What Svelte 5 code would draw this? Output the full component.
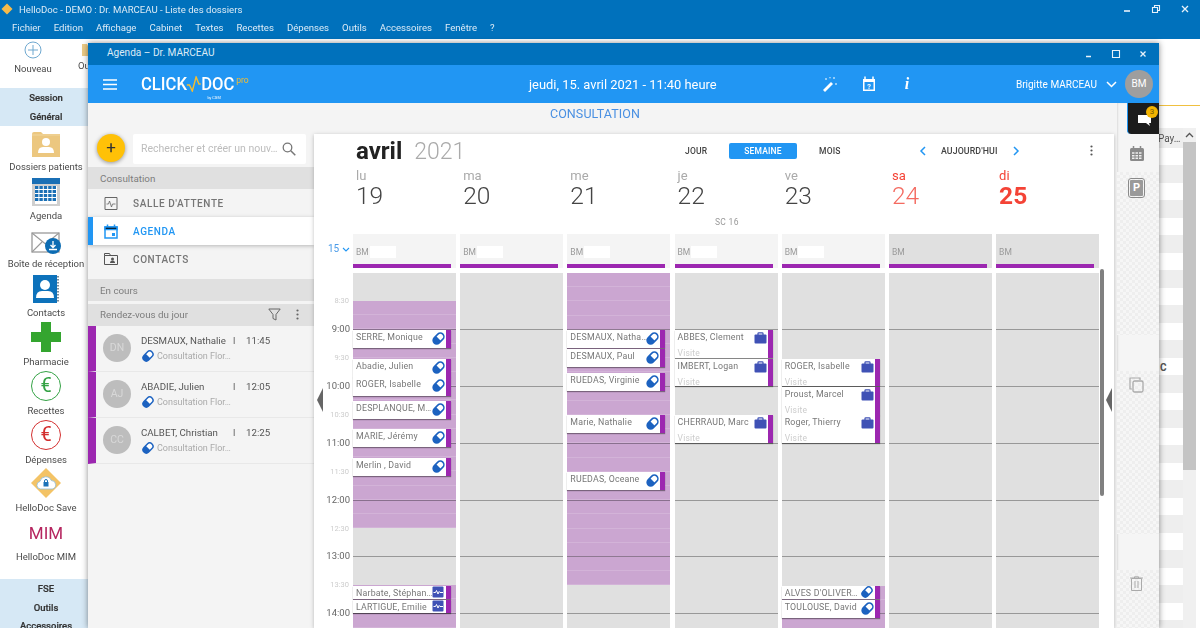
<script>
  const menus = ["Fichier", "Edition", "Affichage", "Cabinet", "Textes", "Recettes", "Dépenses", "Outils", "Accessoires", "Fenêtre", "?"];

  const days = [
    { d: "lu", n: 19 },
    { d: "ma", n: 20 },
    { d: "me", n: 21 },
    { d: "je", n: 22 },
    { d: "ve", n: 23 },
    { d: "sa", n: 24, off: true },
    { d: "di", n: 25, off: true, sunday: true }
  ];

  // y values are px from the top of the time grid (grid starts at 273)
  const gridTop = 273;
  const hourLines = [56, 113, 170, 226.5, 283, 340];
  const times = [
    { t: "8:30", y: 27, half: true },
    { t: "9:00", y: 56 },
    { t: "9:30", y: 84, half: true },
    { t: "10:00", y: 113 },
    { t: "10:30", y: 141, half: true },
    { t: "11:00", y: 170 },
    { t: "11:30", y: 198, half: true },
    { t: "12:00", y: 226.5 },
    { t: "12:30", y: 255, half: true },
    { t: "13:00", y: 283 },
    { t: "13:30", y: 311, half: true },
    { t: "14:00", y: 340 }
  ];

  const blocks = [
    [{ from: 28, to: 255 }, { from: 312, to: 360 }],
    [],
    [{ from: 0, to: 312 }],
    [],
    [{ from: 313, to: 360 }],
    [],
    []
  ];

  const events = [
    [
      { name: "SERRE, Monique", y: 330, h: 18 },
      { name: "Abadie, Julien", y: 359, h: 18 },
      { name: "ROGER, Isabelle", y: 377, h: 19 },
      { name: "DESPLANQUE, M…", y: 401, h: 18 },
      { name: "MARIE, Jérémy", y: 429, h: 18 },
      { name: "Merlin , David", y: 458, h: 18 },
      { name: "Narbate, Stéphan…", y: 586, h: 13, kind: "heart" },
      { name: "LARTIGUE, Emilie", y: 600, h: 13, kind: "heart" }
    ],
    [],
    [
      { name: "DESMAUX, Natha…", y: 330, h: 18 },
      { name: "DESMAUX, Paul", y: 349, h: 18 },
      { name: "RUEDAS, Virginie", y: 373, h: 18 },
      { name: "Marie, Nathalie", y: 415, h: 18 },
      { name: "RUEDAS, Oceane", y: 472, h: 18 }
    ],
    [
      { name: "ABBES, Clement", y: 330, h: 28, kind: "bag" },
      { name: "IMBERT, Logan", y: 359, h: 27, kind: "bag" },
      { name: "CHERRAUD, Marc", y: 415, h: 28, kind: "bag" }
    ],
    [
      { name: "ROGER, Isabelle", y: 359, h: 27, kind: "bag" },
      { name: "Proust, Marcel", y: 387, h: 28, kind: "bag" },
      { name: "Roger, Thierry", y: 415, h: 28, kind: "bag" },
      { name: "ALVES D'OLIVER…", y: 586, h: 13 },
      { name: "TOULOUSE, David", y: 600, h: 18 }
    ],
    [],
    []
  ];

  const appts = [
    { init: "DN", name: "DESMAUX, Nathalie", time: "11:45" },
    { init: "AJ", name: "ABADIE, Julien", time: "12:05" },
    { init: "CC", name: "CALBET, Christian", time: "12:25" }
  ];
</script>

{#snippet pill(size)}
  <svg width={size} height={size} viewBox="0 0 14 14">
    <g transform="rotate(-45 7 7)">
      <rect x="0.4" y="3.2" width="13.2" height="7.6" rx="3.8" fill="#fff" stroke="#1c62c0" stroke-width="1.7" />
      <path d="M7 3.2H4.2a3.8 3.8 0 0 0 0 7.6H7z" fill="#1c62c0" />
    </g>
  </svg>
{/snippet}

{#snippet bag()}
  <svg width="13" height="12" viewBox="0 0 13 12">
    <path d="M4 3V1.6Q4 .8 4.8 .8h3.4q.8 0 .8 .8V3" fill="none" stroke="#3f51b5" stroke-width="1.2" />
    <rect x=".5" y="2.6" width="12" height="9" rx="1" fill="#3f51b5" />
  </svg>
{/snippet}

{#snippet heart()}
  <svg width="12" height="12" viewBox="0 0 12 12">
    <rect x=".5" y=".5" width="11" height="11" rx="1" fill="#3f51b5" />
    <path d="M1.5 6.5h2l1-2 1.5 3.5 1.2-2.5.8 1h3" fill="none" stroke="#fff" stroke-width="1" />
  </svg>
{/snippet}

<div class="screen">
  <header class="topbar">
    <div class="app-title">
      <svg class="diamond" width="12" height="12" viewBox="0 0 12 12"><path d="M6 .5 11.5 6 6 11.5 .5 6z" fill="#f6bb4a" /></svg>
      HelloDoc - DEMO : Dr. MARCEAU - Liste des dossiers
    </div>
    <nav class="menu">
      {#each menus as m}<span>{m}</span>{/each}
    </nav>
    <div class="app-controls">
      <svg width="10" height="10" viewBox="0 0 10 10"><path d="M2 7h6" stroke="#e8f2fa" stroke-width="1.6" /></svg>
      <svg width="10" height="10" viewBox="0 0 10 10"><path d="M1.5 3.5h5v5h-5zM3.5 3V1.5h5v5H7" fill="none" stroke="#e8f2fa" stroke-width="1.1" /></svg>
      <svg width="10" height="10" viewBox="0 0 10 10"><path d="M2 2l6 6M8 2l-6 6" stroke="#e8f2fa" stroke-width="1.3" /></svg>
    </div>
  </header>

  <div class="desktop">
    <aside class="sidebar">
      <div class="toolbar">
        <div class="new">
          <svg width="18" height="18" viewBox="0 0 18 18"><circle cx="9" cy="9" r="8" fill="none" stroke="#6fa8cf" stroke-width="1" /><path d="M9 4v10M4 9h10" stroke="#6fa8cf" stroke-width="1" /></svg>
          <span>Nouveau</span>
        </div>
        <div class="open">
          <svg width="14" height="13" viewBox="0 0 14 13"><path d="M0 1h5l1 2h8v10H0z" fill="#eccb86" /></svg>
          <span>Ouvrir</span>
        </div>
      </div>
      <div class="section">
        <b>Session</b>
        <b>Général</b>
      </div>
      <div class="items">
        <div class="item">
          <svg width="30" height="26" viewBox="0 0 30 26">
            <path d="M1 3q0-2 2-2h7l2 2h17v23H1z" fill="#ecc77f" />
            <path d="M1 4h28" stroke="#f4dca8" stroke-width=".8" />
            <circle cx="15" cy="11" r="4" fill="#fff" />
            <path d="M7 22q0-6 5-6h6q5 0 5 6z" fill="#fff" />
          </svg>
          <span>Dossiers patients</span>
        </div>
        <div class="item">
          <svg width="28" height="28" viewBox="0 0 28 28">
            <rect width="28" height="28" fill="#cfcfcf" />
            <rect width="28" height="6" fill="#1a6fb5" />
            <path d="M3 8h22v18H3z" fill="#fff" />
            <path d="M3 9.5h22M3 13.5h22M3 17.5h22M3 21.5h22" stroke="#1a6fb5" stroke-width="3" stroke-dasharray="3.4 1" />
          </svg>
          <span>Agenda</span>
        </div>
        <div class="item">
          <svg width="30" height="22" viewBox="0 0 30 22">
            <rect x="1" y="1" width="27" height="19" fill="#fff" stroke="#9a9a9a" stroke-width="1.3" />
            <path d="M1 1l13.5 11L28 1M1 20l10-10M28 20L18 10" fill="none" stroke="#9a9a9a" stroke-width="1.1" />
            <circle cx="22" cy="14" r="8" fill="#0c6cb3" />
            <path d="M22 9v6M19.5 13l2.5 2.5 2.5-2.5M18 17.5h8" fill="none" stroke="#fff" stroke-width="1.3" />
          </svg>
          <span>Boîte de réception</span>
        </div>
        <div class="item">
          <svg width="28" height="28" viewBox="0 0 28 28">
            <rect x="1" width="24" height="28" fill="#0d72bb" />
            <path d="M26 1v26" stroke="#7d8d9a" stroke-width="2" stroke-dasharray="1.5 1.5" />
            <circle cx="13" cy="10" r="5" fill="#fff" />
            <path d="M4 23q0-7 6-7h6q6 0 6 7z" fill="#fff" />
          </svg>
          <span>Contacts</span>
        </div>
        <div class="item">
          <svg width="30" height="30" viewBox="0 0 30 30"><path d="M10 0h10v10h10v10H20v10H10V20H0V10h10z" fill="#34a52f" /></svg>
          <span>Pharmacie</span>
        </div>
        <div class="item">
          <div class="euro green">€</div>
          <span>Recettes</span>
        </div>
        <div class="item">
          <div class="euro red">€</div>
          <span>Dépenses</span>
        </div>
        <div class="item">
          <svg width="30" height="30" viewBox="0 0 30 30">
            <path d="M15 0l15 15-15 15L0 15z" fill="#f3c366" />
            <path d="M9.5 21a3.8 3.8 0 0 1-.6-7.500 6 6 0 0 1 11.400-1 4.300 4.300 0 0 1 1 8.500z" fill="#fff" stroke="#8dbbd8" stroke-width=".8" />
            <rect x="12.5" y="14" width="5" height="4.5" fill="#1c72b8" />
            <path d="M13.5 14v-1a1.500 1.500 0 0 1 3 0v1" fill="none" stroke="#1c72b8" />
          </svg>
          <span>HelloDoc Save</span>
        </div>
        <div class="item">
          <div class="mim">MIM</div>
          <span>HelloDoc MIM</span>
        </div>
      </div>
      <div class="section">
        <b>FSE</b>
        <b>Outils</b>
        <b>Accessoires</b>
      </div>
    </aside>

    <section class="window">
      <div class="win-title">
        <span>Agenda – Dr. MARCEAU</span>
        <div class="win-controls">
          <svg width="10" height="10" viewBox="0 0 10 10"><path d="M2 7.5h5" stroke="#e8f2fa" stroke-width="1.5" /></svg>
          <svg width="10" height="10" viewBox="0 0 10 10"><path d="M1.5 1.5h7v7h-7z" fill="none" stroke="#e8f2fa" stroke-width="1.1" /></svg>
          <svg width="10" height="10" viewBox="0 0 10 10"><path d="M2.5 2.5l5 5M7.5 2.5l-5 5" stroke="#e8f2fa" stroke-width="1.3" /></svg>
        </div>
      </div>

      <div class="app-head">
        <svg class="burger" width="14" height="11" viewBox="0 0 14 11"><path d="M0 1h14M0 5.5h14M0 10h14" stroke="#fff" stroke-width="1.5" /></svg>
        <div class="logo">
          <span>CLICK</span>
          <svg width="15" height="16" viewBox="0 0 15 16"><path d="M0 9h3l3 6 4-14 3 7h2" fill="none" stroke="#f6bd2f" stroke-width="1.5" /></svg>
          <span>DOC</span>
          <sup>pro</sup>
          <small>by CGM</small>
        </div>
        <div class="now">jeudi, 15. avril 2021 - 11:40 heure</div>
        <div class="head-icons">
          <svg width="16" height="16" viewBox="0 0 16 16">
            <path d="M1 14l8-8 2 2-8 8z" fill="#fff" />
            <path d="M4 2l1 1-1 1-1-1zM12 1l1 1-1 1-1-1zM14 7l1 1-1 1-1-1zM8 1l.8.8-.8.8-.8-.8z" fill="#fff" />
          </svg>
          <svg width="14" height="16" viewBox="0 0 14 16">
            <path d="M1 3h12v12H1z" fill="#fff" />
            <path d="M3 .5v3M11 .5v3" stroke="#fff" stroke-width="1.5" />
            <path d="M2.5 6h9v7.5h-9z" fill="#2196f3" />
            <text x="7" y="12.5" class="q">?</text>
          </svg>
          <span class="info">i</span>
        </div>
        <div class="user">
          <span>Brigitte MARCEAU</span>
          <svg width="11" height="7" viewBox="0 0 11 7"><path d="M1 1l4.5 4.5L10 1" fill="none" stroke="#fff" stroke-width="1.5" /></svg>
          <div class="avatar">BM</div>
        </div>
      </div>

      <div class="win-body">
        <div class="left">
          <div class="search-row">
            <div class="fab">+</div>
            <div class="search">
              <span>Rechercher et créer un nouv…</span>
              <svg width="14" height="14" viewBox="0 0 14 14"><circle cx="5.5" cy="5.5" r="4.3" fill="none" stroke="#777" stroke-width="1.3" /><path d="M8.8 8.8l4.5 4.5" stroke="#777" stroke-width="1.5" /></svg>
            </div>
          </div>
          <div class="band consult">Consultation</div>
          <div class="nav-row">
            <svg width="13" height="13" viewBox="0 0 13 13"><path d="M.5 .5h12v12H.5z" fill="none" stroke="#666" /><path d="M2 7h2l1-3 2 6 1-3h3" fill="none" stroke="#666" stroke-width=".8" /></svg>
            SALLE D'ATTENTE
          </div>
          <div class="nav-row active">
            <svg width="14" height="15" viewBox="0 0 14 15"><path d="M1 3h12v11H1z" fill="none" stroke="#2196f3" stroke-width="1.5" /><path d="M1 3h12v2.5H1zM3.5 .5V3M10.5 .5V3" stroke="#2196f3" stroke-width="1.5" /><rect x="8" y="9" width="3" height="3" fill="#2196f3" /></svg>
            AGENDA
          </div>
          <div class="nav-row">
            <svg width="14" height="12" viewBox="0 0 14 12"><path d="M.5 2.5h13v9H.5zM.5 2.5V.5h5l1 2" fill="none" stroke="#555" /><circle cx="8.5" cy="6" r="1.5" fill="#555" /><path d="M6 10q0-2.5 2.5-2.5T11 10z" fill="#555" /></svg>
            CONTACTS
          </div>
          <div class="band encours">En cours</div>
          <div class="band rdv">
            <span>Rendez-vous du jour</span>
            <svg width="13" height="13" viewBox="0 0 13 13"><path d="M.8 1h11.4L8 6.5V12L5 10.500v-4z" fill="none" stroke="#666" stroke-width="1" /></svg>
            <svg class="kebab" width="3" height="11" viewBox="0 0 3 11"><circle cx="1.5" cy="1.5" r="1.1" fill="#666" /><circle cx="1.5" cy="5.5" r="1.1" fill="#666" /><circle cx="1.5" cy="9.5" r="1.1" fill="#666" /></svg>
          </div>
          {#each appts as a}
            <div class="appt">
              <div class="initials">{a.init}</div>
              <div class="appt-text">
                <div class="appt-line"><span class="appt-name">{a.name}</span><span class="sep">I</span><span>{a.time}</span></div>
                <div class="appt-sub">{@render pill(12)}<span>Consultation Flor…</span></div>
              </div>
            </div>
          {/each}
        </div>

        <div class="center">
          <div class="context">CONSULTATION</div>
          <div class="card">
            <div class="cal-head">
              <div class="month"><b>avril</b><span>2021</span></div>
              <div class="views">
                <span>JOUR</span>
                <span class="on">SEMAINE</span>
                <span>MOIS</span>
              </div>
              <div class="pager">
                <svg width="7" height="10" viewBox="0 0 7 10"><path d="M6 1L2 5l4 4" fill="none" stroke="#2196f3" stroke-width="1.5" /></svg>
                <span>AUJOURD'HUI</span>
                <svg width="7" height="10" viewBox="0 0 7 10"><path d="M1 1l4 4-4 4" fill="none" stroke="#2196f3" stroke-width="1.5" /></svg>
              </div>
              <svg width="3" height="11" viewBox="0 0 3 11"><circle cx="1.5" cy="1.5" r="1.1" fill="#555" /><circle cx="1.5" cy="5.5" r="1.1" fill="#555" /><circle cx="1.5" cy="9.5" r="1.1" fill="#555" /></svg>
            </div>

            <div class="cols day-heads">
              <div></div>
              {#each days as day}
                <div class="day" class:off={day.off} class:sunday={day.sunday}>
                  <span class="dow">{day.d}</span>
                  <span class="num">{day.n}</span>
                </div>
              {/each}
            </div>

            <div class="week-no">SC 16</div>

            <div class="cols col-heads">
              <div class="step">15 <svg width="8" height="5" viewBox="0 0 8 5"><path d="M1 1l3 3 3-3" fill="none" stroke="#2196f3" stroke-width="1.1" /></svg></div>
              {#each days as day}
                <div class="col-head" class:off={day.off}>
                  <div class="bm"><span>BM</span>{#if !day.off}<i></i>{/if}</div>
                  <div class="bar"></div>
                </div>
              {/each}
            </div>

            <div class="cols time-grid">
              <div class="hours">
                {#each times as t}
                  <span class:half={t.half} style="top:{t.y}px">{t.t}</span>
                {/each}
              </div>
              {#each days as day, c}
                <div class="col">
                  {#each blocks[c] as b}
                    <div class="block" style="top:{b.from}px;height:{b.to - b.from}px"></div>
                  {/each}
                  {#each hourLines as y}
                    <div class="hour-line" style="top:{y}px"></div>
                  {/each}
                  {#each events[c] as e}
                    <div class="event" style="top:{e.y - gridTop}px;height:{e.h}px">
                      <div class="event-body">
                        <span class="event-name">{e.name}</span>
                        {#if e.kind === "bag"}
                          <span class="visit">Visite</span>
                        {/if}
                      </div>
                      <div class="event-icon" class:short={e.h < 18}>
                        {#if e.kind === "bag"}{@render bag()}{:else if e.kind === "heart"}{@render heart()}{:else}{@render pill(e.h < 18 ? 12 : 13)}{/if}
                      </div>
                    </div>
                  {/each}
                </div>
              {/each}
            </div>
            <div class="grid-scroll"></div>
            <svg class="fold fold-left" width="6" height="24" viewBox="0 0 6 24"><path d="M6 0v24L0 12z" fill="#666" /></svg>
            <svg class="fold fold-right" width="6" height="24" viewBox="0 0 6 24"><path d="M6 0v24L0 12z" fill="#666" /></svg>
          </div>
        </div>

        <div class="rail">
          <div class="chat">
            <svg width="16" height="14" viewBox="0 0 16 14"><path d="M0 3h13v8h-2l1 3-4-3H0z" fill="#fff" /></svg>
            <span class="badge">3</span>
          </div>
          <div class="rail-solid first">
            <svg width="14" height="15" viewBox="0 0 14 15"><rect y="2" width="14" height="13" rx="1.5" fill="#8a8a8a" /><path d="M3.5 0v3M10.5 0v3" stroke="#8a8a8a" stroke-width="1.5" /><path d="M2 7h10M2 9.7h10M2 12.3h10" stroke="#eee" stroke-width="1.6" stroke-dasharray="2.5 1" /></svg>
          </div>
          <div class="rail-check">
            <div class="parking"><span>P</span></div>
          </div>
          <div class="rail-solid gap"></div>
          <div class="rail-check">
            <svg width="15" height="16" viewBox="0 0 15 16"><path d="M3 12H1V1h10v2" fill="none" stroke="#aaa" stroke-width="1.2" /><rect x="4" y="4" width="10" height="11" rx="1.5" fill="none" stroke="#aaa" stroke-width="1.3" /></svg>
          </div>
          <div class="rail-solid gap"></div>
          <div class="rail-check last">
            <svg width="13" height="15" viewBox="0 0 13 15"><path d="M0 2h13M4.5 2V.8h4V2" fill="none" stroke="#aaa" stroke-width="1" /><path d="M1.5 2.5h10V14.5h-10zM5 5v7M8 5v7" fill="none" stroke="#aaa" stroke-width="1" /></svg>
          </div>
        </div>
      </div>
    </section>

    <div class="backdrop">
      <div class="yellow"></div>
      <div class="table-wrap">
        <div class="table">
          <div class="th">Pay…</div>
          <div class="rows"><b>C</b></div>
        </div>
        <div class="vscroll">
          <svg width="9" height="6" viewBox="0 0 9 6"><path d="M1 5l3.5-3.5L8 5" fill="none" stroke="#555" stroke-width="1.3" /></svg>
          <div class="thumb"></div>
        </div>
      </div>
    </div>
  </div>
</div>

<style>
  :global(body) {
    overflow: hidden;
    background: #fff;
    font-family: Roboto, "Liberation Sans", sans-serif;
  }

  .screen {
    width: 1200px;
    height: 628px;
    display: flex;
    flex-direction: column;
    overflow: hidden;
    filter: blur(0.35px);
  }

  /* main application bar */
  .topbar {
    position: relative;
    height: 40px;
    flex: none;
    background: #0071bc;
    color: #dcebf6;
    font-size: 9.6px;
    border-bottom: 1px solid #fff;
    box-sizing: border-box;
  }
  .app-title {
    display: flex;
    align-items: center;
    gap: 6px;
    height: 18px;
    padding-left: 1px;
  }
  .menu {
    display: flex;
    gap: 13px;
    padding: 4px 0 0 12px;
  }
  .app-controls {
    position: absolute;
    right: 10px;
    top: 4px;
    display: flex;
    gap: 19px;
  }

  .desktop {
    flex: 1;
    display: flex;
    min-height: 0;
  }

  /* left application sidebar */
  .sidebar {
    width: 88px;
    flex: none;
    display: flex;
    flex-direction: column;
    color: #4a4a4a;
    text-align: center;
  }
  .toolbar {
    height: 48px;
    flex: none;
    display: flex;
    font-size: 9.5px;
  }
  .new {
    width: 66px;
    flex: none;
    display: flex;
    flex-direction: column;
    align-items: center;
    gap: 4px;
    padding-top: 1px;
    box-sizing: border-box;
  }
  .open {
    flex: none;
    display: flex;
    flex-direction: column;
    align-items: flex-start;
    gap: 4px;
    padding: 3px 0 0 12px;
    white-space: nowrap;
  }
  .open svg {
    margin-left: 4px;
  }
  .section {
    flex: none;
    background: #d6e8f5;
    display: flex;
    flex-direction: column;
    font-size: 9.5px;
    color: #333;
    line-height: 18.5px;
    padding: 1px 0 0 4px;
  }
  .section b {
    font-weight: 500;
    -webkit-text-stroke: 0.2px #333;
  }
  .items {
    flex: none;
    margin-top: -1px;
    padding: 0 0 15px 4px;
    display: flex;
    flex-direction: column;
  }
  .item {
    height: 48.8px;
    display: flex;
    flex-direction: column;
    align-items: center;
    justify-content: flex-end;
    gap: 3px;
    font-size: 9.5px;
    white-space: nowrap;
  }
  .item > span {
    line-height: 14px;
    height: 14px;
  }
  .euro {
    width: 30px;
    height: 30px;
    box-sizing: border-box;
    border-radius: 50%;
    border: 1.3px solid;
    font-size: 20px;
    line-height: 27px;
  }
  .green {
    color: #34a245;
  }
  .red {
    color: #d32f2f;
  }
  .mim {
    height: 28px;
    font-size: 17px;
    line-height: 28px;
    color: #b5255f;
  }

  /* agenda window */
  .window {
    width: 1071px;
    flex: none;
    margin-top: 3px;
    display: flex;
    flex-direction: column;
    position: relative;
    z-index: 2;
    background: #f4f4f4;
    box-shadow: 0 0 6px rgba(0, 0, 0, 0.45);
  }
  .win-title {
    height: 22px;
    flex: none;
    background: #0071bc;
    color: #dcebf6;
    font-size: 10.1px;
    display: flex;
    align-items: center;
    justify-content: space-between;
    padding: 0 11px 4px 19px;
    box-sizing: border-box;
  }
  .win-controls {
    display: flex;
    gap: 17px;
    padding-top: 4px;
  }
  .app-head {
    height: 38px;
    flex: none;
    background: #2196f3;
    color: #fff;
    position: relative;
    display: flex;
    align-items: center;
  }
  .burger {
    margin-left: 15px;
  }
  .logo {
    position: relative;
    margin-left: 24px;
    display: flex;
    align-items: center;
    font-size: 17.5px;
    font-weight: 500;
    transform: scaleX(0.95);
    transform-origin: left;
  }
  .logo sup {
    color: #f6bd2f;
    font-size: 9px;
    font-weight: 400;
    margin: -9px 0 0 2px;
  }
  .logo small {
    position: absolute;
    left: 70px;
    top: 21px;
    font-size: 4px;
    font-weight: 400;
  }
  .now {
    position: absolute;
    left: 441px;
    font-size: 12.9px;
    top: 12px;
  }
  .head-icons {
    position: absolute;
    left: 734px;
    display: flex;
    align-items: center;
    gap: 24px;
  }
  .q {
    fill: #fff;
    font-size: 7.5px;
    font-weight: 700;
    text-anchor: middle;
  }
  .info {
    font-family: "Liberation Serif", serif;
    font-style: italic;
    font-weight: 700;
    font-size: 16px;
    width: 14px;
    text-align: center;
  }
  .user {
    margin-left: auto;
    margin-right: 6px;
    display: flex;
    align-items: center;
    font-size: 10px;
  }
  .user svg {
    margin: 0 8px 0 9px;
  }
  .avatar {
    width: 28px;
    height: 28px;
    border-radius: 50%;
    background: #9e9e9e;
    font-size: 10px;
    line-height: 28px;
    text-align: center;
  }

  .win-body {
    flex: 1;
    display: flex;
    min-height: 0;
  }

  /* agenda left panel */
  .left {
    width: 226px;
    flex: none;
    display: flex;
    flex-direction: column;
  }
  .search-row {
    height: 64px;
    flex: none;
    display: flex;
    align-items: flex-start;
    padding-top: 31px;
    box-sizing: border-box;
  }
  .fab {
    width: 28px;
    height: 28px;
    flex: none;
    margin: 0 8px 0 9px;
    border-radius: 50%;
    background: #ffc107;
    box-shadow: 0 1px 4px rgba(0, 0, 0, 0.4);
    color: #333;
    font-size: 17px;
    line-height: 27px;
    text-align: center;
  }
  .search {
    width: 173px;
    height: 30px;
    box-sizing: border-box;
    background: #fff;
    border-radius: 2px;
    display: flex;
    align-items: center;
    justify-content: space-between;
    padding: 0 10px 1px 8px;
    color: #bdbdbd;
    font-size: 10.5px;
    white-space: nowrap;
  }
  .band {
    background: #e0e0e0;
    color: #7d7d7d;
    font-size: 9.8px;
    display: flex;
    align-items: center;
    padding-left: 12px;
    flex: none;
  }
  .consult {
    height: 22px;
  }
  .encours {
    height: 22px;
    margin-top: 6px;
  }
  .rdv {
    height: 22px;
    margin-top: 2.5px;
    padding-right: 15px;
  }
  .rdv span {
    flex: 1;
  }
  .kebab {
    margin-left: 15px;
  }
  .nav-row {
    height: 28px;
    flex: none;
    display: flex;
    align-items: center;
    gap: 15px;
    padding-left: 16px;
    font-size: 10px;
    font-weight: 500;
    letter-spacing: 0.6px;
    color: #757575;
  }
  .nav-row svg {
    width: 14px;
  }
  .active {
    background: #fff;
    color: #2196f3;
    border-left: 5px solid #2196f3;
    padding-left: 11px;
    box-shadow: 0 1px 4px rgba(0, 0, 0, 0.25);
    position: relative;
  }
  .appt {
    height: 46px;
    flex: none;
    box-sizing: border-box;
    display: flex;
    align-items: center;
    border-left: 8px solid #9c27b0;
    border-bottom: 1px solid #e8e8e8;
    padding-left: 7px;
    color: #555;
  }
  .initials {
    width: 28px;
    height: 28px;
    border-radius: 50%;
    background: #bdbdbd;
    color: #d8d8d8;
    font-size: 10.5px;
    line-height: 28px;
    text-align: center;
    flex: none;
    margin-right: 10px;
  }
  .appt-line {
    display: flex;
    font-size: 9.7px;
    line-height: 14px;
    white-space: nowrap;
  }
  .appt-name {
    width: 92px;
  }
  .sep {
    width: 13px;
    font-size: 8.5px;
  }
  .appt-sub {
    display: flex;
    align-items: center;
    gap: 3px;
    font-size: 9px;
    color: #aaa;
    margin: 2px 0 0 1px;
  }

  /* week view */
  .center {
    width: 803px;
    flex: none;
    display: flex;
    flex-direction: column;
    min-height: 0;
  }
  .context {
    height: 31px;
    flex: none;
    text-align: center;
    color: #4a90e2;
    font-size: 12.5px;
    line-height: 21px;
    padding-right: 241px;
    letter-spacing: 0.1px;
  }
  .card {
    width: 800px;
    flex: 1;
    min-height: 0;
    background: #fff;
    box-shadow: 0 1px 4px rgba(0, 0, 0, 0.25);
    position: relative;
    display: flex;
    flex-direction: column;
  }
  .cal-head {
    height: 33px;
    flex: none;
    display: flex;
    align-items: center;
    padding-left: 42px;
    box-sizing: border-box;
  }
  .month {
    width: 329px;
    flex: none;
    font-size: 24px;
    display: flex;
    align-items: baseline;
    color: #222;
  }
  .month b {
    font-weight: 700;
    margin-right: 12px;
  }
  .month span {
    font-weight: 300;
    font-size: 23px;
    color: #aaa;
  }
  .views {
    width: 234px;
    flex: none;
    display: flex;
    align-items: center;
    font-size: 8.5px;
    font-weight: 500;
    color: #444;
    letter-spacing: 0.2px;
  }
  .views span {
    width: 44px;
  }
  .views .on {
    width: 68px;
    height: 16px;
    line-height: 16px;
    text-align: center;
    background: #2196f3;
    border-radius: 2px;
    color: #fff;
    margin-right: 22px;
  }
  .pager {
    width: 171px;
    flex: none;
    display: flex;
    align-items: center;
    gap: 15px;
    font-size: 8.8px;
    font-weight: 500;
    color: #444;
    letter-spacing: 0.1px;
  }

  .cols {
    display: grid;
    grid-template-columns: 34.8px repeat(7, 103px);
    column-gap: 4.2px;
    flex: none;
  }
  .day-heads {
    height: 45px;
  }
  .day {
    display: flex;
    flex-direction: column;
    padding: 1px 0 0 3px;
    color: #444;
  }
  .dow {
    font-size: 13px;
    color: #aaa;
    line-height: 15px;
  }
  .num {
    font-size: 24.5px;
    font-weight: 300;
    line-height: 25px;
  }
  .off,
  .off .dow {
    color: #f44336;
  }
  .off .num {
    color: #f46a60;
  }
  .sunday .num {
    color: #f44336;
    font-weight: 700;
  }
  .week-no {
    height: 22px;
    flex: none;
    font-size: 8.5px;
    color: #999;
    line-height: 20px;
    padding-left: 401px;
    letter-spacing: 0.3px;
  }
  .col-heads {
    height: 34px;
  }
  .step {
    color: #4a9be8;
    font-size: 10px;
    padding: 9px 0 0 14px;
    white-space: nowrap;
  }
  .col-head {
    background: #f4f4f4;
    display: flex;
    flex-direction: column;
    justify-content: flex-end;
  }
  .col-head.off {
    background: #e0e0e0;
  }
  .bm {
    flex: 1;
    display: flex;
    align-items: center;
    padding: 5px 0 0 3px;
    font-size: 8.5px;
    color: #999;
  }
  .bm i {
    width: 26px;
    height: 12px;
    background: #fff;
    margin-left: 1px;
  }
  .bar {
    width: 98px;
    height: 4px;
    background: #9c27b0;
  }
  .time-grid {
    flex: 1;
    min-height: 0;
    margin-top: 5px;
    position: relative;
    overflow: hidden;
  }
  .hours span {
    position: absolute;
    right: 764px;
    left: 0;
    text-align: right;
    transform: translateY(-6px);
    font-size: 9.5px;
    line-height: 12px;
    color: #666;
  }
  .hours .half {
    font-size: 7.5px;
    color: #ccc;
    transform: translateY(-5px);
    padding-right: 1px;
  }
  .col {
    background: #e0e0e0;
    position: relative;
  }
  .block {
    position: absolute;
    left: 0;
    right: 0;
    background: repeating-linear-gradient(#cba6d1 0 13.2px, #d3b3d8 13.2px 14.2px);
  }
  .hour-line {
    position: absolute;
    left: 0;
    right: 0;
    height: 1px;
    background: rgba(0, 0, 0, 0.32);
  }
  .event {
    position: absolute;
    left: 0;
    width: 98px;
    box-sizing: border-box;
    background: #fff;
    border-right: 5px solid #9c27b0;
    box-shadow: 0 1px 1px rgba(0, 0, 0, 0.4);
    display: flex;
    justify-content: space-between;
    overflow: hidden;
    color: #777;
    font-size: 8.8px;
    letter-spacing: 0.2px;
  }
  .event-body {
    display: flex;
    flex-direction: column;
    padding-left: 3px;
    white-space: nowrap;
    line-height: 12px;
    gap: 4px;
    min-width: 0;
  }
  .event-name {
    padding-top: 1px;
  }
  .visit {
    color: #ccc;
    font-size: 8.5px;
  }
  .event-icon {
    flex: none;
    width: 14px;
    padding-top: 2px;
    line-height: 0;
  }
  .event-icon.short {
    padding-top: 0;
  }
  .grid-scroll {
    position: absolute;
    left: 786px;
    top: 135px;
    width: 4px;
    height: 227px;
    border-radius: 2px;
    background: #808080;
  }
  .fold {
    position: absolute;
    top: 254px;
  }
  .fold-left {
    left: 3px;
  }
  .fold-right {
    left: 792px;
  }

  /* right tool rail */
  .rail {
    width: 42px;
    flex: none;
    position: relative;
    display: flex;
    flex-direction: column;
    align-items: stretch;
    background: #f5f5f5;
    box-shadow: inset 1px 0 2px rgba(0, 0, 0, 0.1);
  }
  .chat {
    position: absolute;
    right: 0;
    top: 0;
    width: 32px;
    height: 31px;
    background: #1c1c1c;
    border-radius: 0 0 0 4px;
    border-left: 1px solid #2196f3;
    box-sizing: border-box;
    display: flex;
    align-items: center;
    justify-content: center;
    padding-left: 4px;
  }
  .badge {
    position: absolute;
    left: 18px;
    top: 3px;
    width: 12px;
    height: 12px;
    border-radius: 50%;
    background: #f4b400;
    color: #7a5b00;
    font-size: 8px;
    line-height: 12px;
    text-align: center;
  }
  .rail-solid {
    flex: none;
    height: 36px;
    display: flex;
    justify-content: center;
    align-items: center;
  }
  .rail-solid.first {
    height: 69px;
    padding: 31px 3px 0 0;
    box-sizing: border-box;
  }
  .rail-check {
    flex: none;
    height: 163px;
    background: repeating-conic-gradient(#eeeeee 0 25%, #f6f6f6 0 50%) 0 0 / 6px 6px;
    display: flex;
    justify-content: center;
    padding: 6px 3px 0 0;
    box-sizing: border-box;
  }
  .rail-check.last {
    flex: 1;
    height: auto;
  }
  .parking {
    box-sizing: border-box;
    width: 17px;
    height: 20px;
    border: 1.5px solid #8a8a8a;
    border-radius: 3px;
    padding: 1px;
  }
  .parking span {
    display: block;
    height: 100%;
    border-radius: 1px;
    background: #9a9a9a;
    color: #fff;
    font-size: 11px;
    font-weight: 700;
    line-height: 15px;
    text-align: center;
  }

  /* window behind the agenda */
  .backdrop {
    flex: 1;
    min-width: 0;
    position: relative;
    overflow: hidden;
    display: flex;
    flex-direction: column;
  }
  .yellow {
    height: 1px;
    background: #f0c040;
    margin-top: 65px;
    flex: none;
  }
  .table-wrap {
    flex: 1;
    display: flex;
    margin-top: 22px;
    min-height: 0;
  }
  .table {
    width: 24px;
    flex: none;
    display: flex;
    flex-direction: column;
    font-size: 10px;
    color: #555;
  }
  .th {
    height: 20px;
    flex: none;
    background: #eee;
    line-height: 21px;
    white-space: nowrap;
    overflow: hidden;
    margin-left: -2px;
    padding-left: 1px;
  }
  .rows {
    flex: 1;
    background: repeating-linear-gradient(#fff 0 17.5px, #eeeeee 17.5px 35px);
    padding-top: 213px;
    line-height: 14px;
  }
  .rows b {
    font-size: 10px;
    padding-left: 1px;
  }
  .vscroll {
    width: 13px;
    background: #f0f0f0;
    display: flex;
    flex-direction: column;
    align-items: center;
    padding-top: 4px;
    box-sizing: border-box;
  }
  .thumb {
    width: 100%;
    height: 328px;
    margin-top: 4px;
    background: #c4c4c4;
    flex: none;
  }
</style>
